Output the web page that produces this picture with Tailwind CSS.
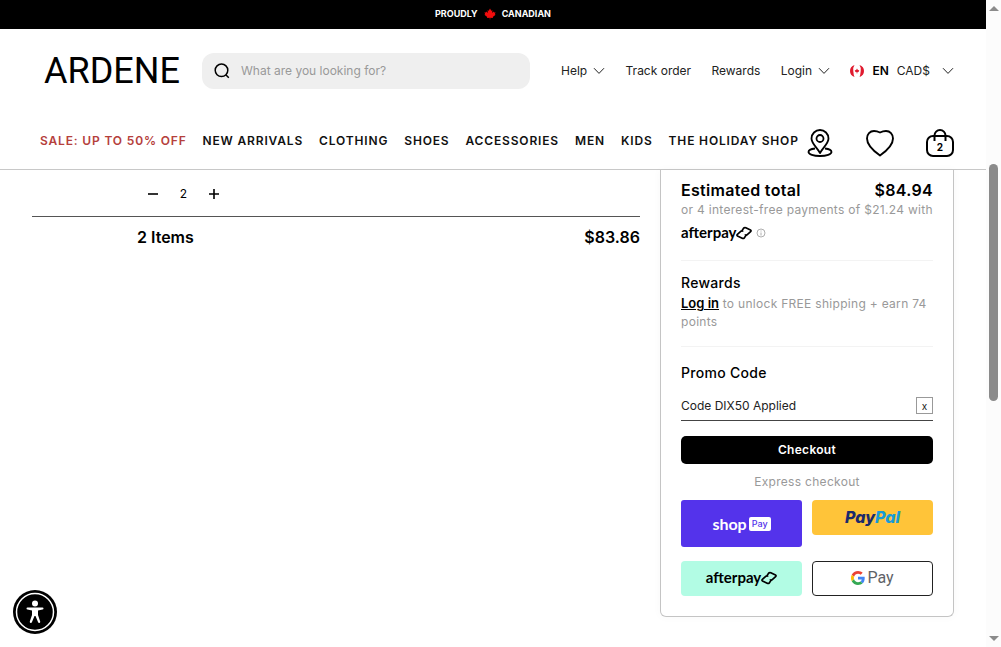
<!DOCTYPE html>
<html lang="en">

<head>
    <meta charset="UTF-8">
    <meta name="viewport" content="width=device-width, initial-scale=1.0">
    <title>Shopping Bag | Ardene</title>
    <script src="https://cdn.jsdelivr.net/npm/@tailwindcss/browser@4"></script>
</head>

<body class="flex min-h-screen bg-white font-['Inter',sans-serif] text-black">

    <!-- shared symbols -->
    <svg class="hidden">
        <symbol id="chevron" viewBox="0 0 12 8">
            <path d="M1 1.2 6 6.4 11 1.2" fill="none" stroke="currentColor" stroke-width="1" />
        </symbol>
        <symbol id="afterpay-mark" viewBox="0 0 16 14">
            <path d="M6 4.600 7.600 2.200Q8.600 1.200 9.800 1.700L14.500 4Q15.600 4.700 14.600 5.600L11 8.800Q9.600 9.800 9.200 8.200M10 9.400 8.400 11.800Q7.400 12.800 6.200 12.300L1.500 10Q.4 9.300 1.400 8.400L5 5.200Q6.400 4.200 6.800 5.800" fill="none" stroke="currentColor" stroke-width="1.700" stroke-linejoin="round" />
        </symbol>
    </svg>

    <div class="min-w-0 flex-1">

        <header class="border-b border-[#c8c8c8]">
            <div class="flex h-[29px] items-center justify-center gap-1.5 bg-black pb-0.5 text-[9px] font-bold text-white">
                <span>PROUDLY</span>
                <svg class="h-3 w-3" viewBox="0 0 24 24" fill="#f20d0d">
                    <path d="M12 1 9.500 5.500 7 4.300 8 10 4.800 7 4 9 1 8.500 2.300 12.500.8 13.500 6.500 18 6 20 11.500 19.300V23h1v-3.700L18 20l-.5-2 5.700-4.500-1.500-1L23 8.500 20 9l-.8-2L16 10l1-5.700-2.500 1.200z" />
                </svg>
                <span>CANADIAN</span>
            </div>

            <div class="flex items-center pt-6 pr-8 pl-11">
                <a href="#" class="w-[136px] text-[36px] leading-8 font-['Roboto',sans-serif] font-normal">ARDENE</a>
                <label class="ml-[22px] flex h-9 min-w-0 flex-1 items-center rounded-xl bg-[#efefef] px-3">
                    <svg class="h-4 w-4 shrink-0" viewBox="0 0 16 16" fill="none" stroke="#000" stroke-width="1.500">
                        <circle cx="7.500" cy="7.300" r="6.300" />
                        <path d="m11.800 11.800 3 3" />
                    </svg>
                    <input type="search" aria-label="Search" placeholder="What are you looking for?" class="ml-[11px] min-w-0 flex-1 text-xs outline-none placeholder:text-[#999]">
                </label>
                <div class="ml-[31px] flex w-[393px] items-center justify-between text-xs text-[#222]">
                    <button class="flex items-center gap-1.5">Help <svg class="h-2 w-3"><use href="#chevron" /></svg></button>
                    <a href="#">Track order</a>
                    <a href="#">Rewards</a>
                    <button class="flex items-center gap-1.5">Login <svg class="h-2 w-3"><use href="#chevron" /></svg></button>
                    <button class="flex items-center gap-2">
                        <svg class="h-3 w-3.5" viewBox="0 0 14 12" fill="#e01b2f">
                            <path d="M4.500 0Q3 2 3.300 6T4.500 12Q0 10.500 0 6T4.500 0zM9.500 0Q11 2 10.700 6T9.500 12Q14 10.500 14 6T9.500 0zM7 3.500l.7 1.200L9.300 5.500 8.500 7 7.300 7.300V8.500h-.6V7.300L5.500 7l-.8-1.500 1.600-.8z" />
                        </svg>
                        <b class="font-semibold text-black">EN</b>
                        <span>CAD$</span>
                        <svg class="ml-1 h-2 w-3"><use href="#chevron" /></svg>
                    </button>
                </div>
            </div>

            <div class="flex items-center justify-between pt-10 pr-8 pb-3 pl-10">
                <nav class="flex gap-4 pb-1 text-xs font-semibold tracking-[0.07em] whitespace-nowrap text-[#111]">
                    <a href="#" class="text-[#b5403c]">SALE: UP TO 50% OFF</a>
                    <a href="#">NEW ARRIVALS</a>
                    <a href="#">CLOTHING</a>
                    <a href="#">SHOES</a>
                    <a href="#">ACCESSORIES</a>
                    <a href="#">MEN</a>
                    <a href="#">KIDS</a>
                    <a href="#">THE HOLIDAY SHOP</a>
                </nav>
                <div class="flex gap-8">
                    <a href="#" aria-label="Find a store">
                        <svg class="h-7 w-7" viewBox="0 0 28 28" fill="none" stroke="#000" stroke-width="1.800" stroke-linejoin="round">
                            <path d="M14 24C11 18.500 5.500 14.500 5.500 9.500a8.500 8.500 0 0 1 17 0C22.500 14.500 17 18.500 14 24z" />
                            <circle cx="14" cy="9.500" r="3.500" />
                            <path d="M9 19.500C5 20 2.500 21.400 2.500 23c0 2.300 5 4 11.500 4s11.500-1.700 11.500-4c0-1.600-2.500-3-6.500-3.500" />
                        </svg>
                    </a>
                    <a href="#" aria-label="Wish list">
                        <svg class="h-7 w-7" viewBox="0 0 28 28" fill="none" stroke="#000" stroke-width="1.900" stroke-linejoin="round">
                            <path d="M14 26.500C9 23 1 17 1 9.500 1 5 4 2 8 2c2.500 0 4 .5 6 1.500C16 2.500 17.500 2 20 2c4 0 7 3 7 7.500C27 17 19 23 14 26.500z" />
                        </svg>
                    </a>
                    <a href="#" aria-label="Bag" class="relative">
                        <svg class="h-7 w-7" viewBox="0 0 28 28" fill="none" stroke="#000" stroke-width="2">
                            <rect x="1" y="7" width="26" height="20" rx="6" />
                            <path d="M8.500 12V6.500a5.500 5.500 0 0 1 11 0V12" />
                        </svg>
                        <span class="absolute inset-x-0 top-3 text-center text-[10px] leading-3 font-bold">2</span>
                    </a>
                </div>
            </div>
        </header>

        <main class="flex items-start gap-5 px-8">
            <section class="flex-1">
                <div class="flex h-[47px] items-center border-b border-[#555] pt-0.5 pl-[115px] text-xs">
                    <button aria-label="Decrease quantity" class="flex w-3"><svg class="h-3 w-3" viewBox="0 0 12 12" stroke="#000" stroke-width="1.600"><path d="M1 6h10" /></svg></button>
                    <span class="w-[49px] text-center">2</span>
                    <button aria-label="Increase quantity" class="flex w-3"><svg class="h-3 w-3" viewBox="0 0 12 12" stroke="#000" stroke-width="1.600"><path d="M1 6h10M6 1v10" /></svg></button>
                </div>
                <div class="flex justify-between pt-2 pl-[105px] text-base leading-6 font-semibold">
                    <span>2 Items</span>
                    <span>$83.86</span>
                </div>
            </section>

            <aside class="w-[294px] rounded-b-md border border-t-0 border-[#c4c4c4] px-5 pt-2.5 pb-5 text-xs tracking-wide text-[#999] shadow-[0_0_10px_rgba(0,0,0,0.03)]">
                <div class="flex justify-between text-base leading-5 font-semibold text-black">
                    <span>Estimated total</span>
                    <span>$84.94</span>
                </div>
                <p class="leading-5 whitespace-nowrap">or 4 interest-free payments of $21.24 with</p>
                <div class="flex h-[26px] items-center text-[15px] font-bold tracking-normal text-black">
                    <span class="font-['Lato',sans-serif]">afterpay</span>
                    <svg class="h-3.5 w-4"><use href="#afterpay-mark" /></svg>
                    <svg class="ml-1 h-2.5 w-2.5" viewBox="0 0 10 10" fill="none" stroke="#999" stroke-width=".8"><circle cx="5" cy="5" r="4" /><path d="M5 4.500V7.500M5 2.500v1" /></svg>
                </div>

                <div class="mt-3.5 border-t border-[#f3f3f3] pt-3">
                    <h2 class="text-sm leading-5 font-medium text-black">Rewards</h2>
                    <p class="mt-px leading-[18px]"><a href="#" class="text-[13px] font-semibold tracking-normal text-black underline">Log in</a> to unlock FREE shipping + earn 74 points</p>
                </div>

                <div class="mt-[15px] border-t border-[#f3f3f3] pt-4">
                    <h2 class="text-sm leading-5 font-medium text-black">Promo Code</h2>
                    <div class="mt-3 flex h-[26px] items-center justify-between border-b border-[#444] pb-1 tracking-normal text-[#222]">
                        <span>Code DIX50 Applied</span>
                        <button aria-label="Remove code" class="h-[17px] w-[17px] border border-[#999] text-[10px] leading-[14px]">x</button>
                    </div>
                </div>

                <button class="mt-[15px] h-7 w-full rounded-[5px] bg-black font-semibold tracking-wide text-white">Checkout</button>
                <p class="h-9 text-center leading-9">Express checkout</p>

                <div class="grid grid-cols-2 items-start gap-x-2.5 gap-y-3.5 tracking-normal">
                    <button aria-label="Shop Pay" class="flex h-[47px] items-center justify-center gap-0.5 rounded-[3px] bg-[#5433eb] text-white">
                        <span class="font-['Lato',sans-serif] text-base leading-5 font-bold">shop</span>
                        <span class="rounded-[2px] bg-white px-[3px] text-[9px] leading-[14px] font-medium text-[#5433eb]">Pay</span>
                    </button>
                    <button aria-label="PayPal" class="flex h-[35px] items-center justify-center rounded-[4px] bg-[#ffc439] pb-0.5 text-base font-extrabold italic">
                        <span class="text-[#1b2a6b]">Pay</span><span class="text-[#179bd7]">Pal</span>
                    </button>
                    <button aria-label="Afterpay" class="flex h-[35px] items-center justify-center rounded-[4px] bg-[#b2fce4] pb-0.5 text-[15px] font-bold text-black">
                        <span class="font-['Lato',sans-serif]">afterpay</span>
                        <svg class="h-3.5 w-4"><use href="#afterpay-mark" /></svg>
                    </button>
                    <button aria-label="Google Pay" class="flex h-[35px] items-center justify-center gap-0.5 rounded-[4px] border border-[#222] pb-0.5 text-[#5f6368]">
                        <svg class="h-3.5 w-3.5" viewBox="0 0 48 48">
                            <path fill="#ea4335" d="M24 9.500c3.540 0 6.710 1.220 9.210 3.600l6.850-6.850C35.900 2.380 30.470 0 24 0 14.620 0 6.510 5.380 2.560 13.220l7.980 6.190C12.430 13.720 17.740 9.500 24 9.500z" />
                            <path fill="#4285f4" d="M46.980 24.550c0-1.570-.15-3.090-.38-4.550H24v9.020h12.940c-.58 2.960-2.260 5.480-4.780 7.180l7.730 6c4.510-4.180 7.090-10.360 7.090-17.650z" />
                            <path fill="#fbbc05" d="M10.530 28.590c-.48-1.450-.76-2.990-.76-4.590s.27-3.140.76-4.590l-7.980-6.190C.92 16.460 0 20.120 0 24s.92 7.540 2.560 10.780z" />
                            <path fill="#34a853" d="M24 48c6.480 0 11.930-2.130 15.890-5.810l-7.730-6c-2.150 1.450-4.920 2.300-8.160 2.300-6.260 0-11.570-4.220-13.470-9.910l-7.980 6.190C6.510 42.620 14.620 48 24 48z" />
                        </svg>
                        <span class="font-['Roboto',sans-serif] text-base">Pay</span>
                    </button>
                </div>
            </aside>
        </main>
    </div>

    <button aria-label="Accessibility options" class="fixed bottom-[13px] left-[13px]">
        <svg class="h-11 w-11" viewBox="0 0 44 44">
            <circle cx="22" cy="22" r="22" />
            <circle cx="22" cy="22" r="18.500" fill="none" stroke="#fff" stroke-width="1.500" />
            <g fill="#fff">
                <circle cx="22" cy="13.500" r="3" />
                <path d="M14.500 17.500h15q1 0 1 1t-1 1L25 20.500V25l2.200 6.500q.3 1-.7 1.400-1 .3-1.400-.7L22.500 26h-1l-2.600 6.200q-.4 1-1.400.7-1-.4-.7-1.400L19 25v-4.500l-4.500-1q-1 0-1-1t1-1z" />
            </g>
        </svg>
    </button>

    <!-- page scrollbar -->
    <div class="sticky top-0 flex h-screen w-[15px] shrink-0 flex-col items-center bg-[#fcfcfc] py-1.5" aria-hidden="true">
        <svg class="h-1.5 w-2.5" viewBox="0 0 10 6" fill="#8b8b8b"><path d="M5 0 10 5H0z" /></svg>
        <div class="mt-[152px] h-[237px] w-[9px] rounded-full bg-[#8b8b8b]"></div>
        <svg class="mt-auto h-1.5 w-2.5" viewBox="0 0 10 6" fill="#8b8b8b"><path d="M0 1h10L5 6z" /></svg>
    </div>

</body>

</html>
